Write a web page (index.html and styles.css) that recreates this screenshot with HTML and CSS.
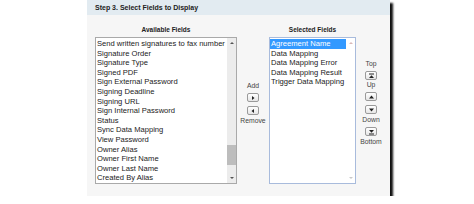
FILE: index.html
```html
<!DOCTYPE html>
<html lang="en">
<head>
    <meta charset="UTF-8">
    <title>Select Fields</title>
    <link rel="stylesheet" href="styles.css">
</head>
<body>
    <div class="panel">
        <div class="head">Step 3. Select Fields to Display</div>
        <div class="body">
            <div class="col-avail">
                <div class="label">Available Fields</div>
                <div class="list grey">
                    <div class="items">
                        <div>Send written signatures to fax number</div>
                        <div>Signature Order</div>
                        <div>Signature Type</div>
                        <div>Signed PDF</div>
                        <div>Sign External Password</div>
                        <div>Signing Deadline</div>
                        <div>Signing URL</div>
                        <div>Sign Internal Password</div>
                        <div>Status</div>
                        <div>Sync Data Mapping</div>
                        <div>View Password</div>
                        <div>Owner Alias</div>
                        <div>Owner First Name</div>
                        <div>Owner Last Name</div>
                        <div>Created By Alias</div>
                    </div>
                    <div class="scroll">
                        <span class="arr up"></span>
                        <div class="track"><div class="thumb"></div></div>
                        <span class="arr down"></span>
                    </div>
                </div>
            </div>
            <div class="col-mid">
                <div class="btxt">Add</div>
                <div class="btn"><svg width="6" height="6" viewBox="0 0 6 6"><path d="M2 1 L4.5 3 L2 5 Z" fill="#222"/></svg></div>
                <div class="btn"><svg width="6" height="6" viewBox="0 0 6 6"><path d="M4 1 L1.5 3 L4 5 Z" fill="#222"/></svg></div>
                <div class="btxt">Remove</div>
            </div>
            <div class="col-sel">
                <div class="label">Selected Fields</div>
                <div class="list blue">
                    <div class="items">
                        <div class="on">Agreement Name</div>
                        <div>Data Mapping</div>
                        <div>Data Mapping Error</div>
                        <div>Data Mapping Result</div>
                        <div>Trigger Data Mapping</div>
                    </div>
                    <div class="scroll off">
                        <span class="arr up"></span>
                        <div class="track"></div>
                        <span class="arr down"></span>
                    </div>
                </div>
            </div>
            <div class="col-order">
                <div class="btxt">Top</div>
                <div class="btn"><svg width="7" height="6" viewBox="0 0 7 6"><path d="M1 1 H6" stroke="#222" stroke-width="1"/><path d="M1 5 L3.5 2.2 L6 5 Z" fill="#222"/></svg></div>
                <div class="btxt">Up</div>
                <div class="btn"><svg width="7" height="6" viewBox="0 0 7 6"><path d="M1 4.5 L3.5 1.5 L6 4.5 Z" fill="#222"/></svg></div>
                <div class="btn"><svg width="7" height="6" viewBox="0 0 7 6"><path d="M1 1.5 L3.5 4.5 L6 1.5 Z" fill="#222"/></svg></div>
                <div class="btxt">Down</div>
                <div class="btn"><svg width="7" height="6" viewBox="0 0 7 6"><path d="M1 1 L3.5 3.8 L6 1 Z" fill="#222"/><path d="M1 5 H6" stroke="#222" stroke-width="1"/></svg></div>
                <div class="btxt">Bottom</div>
            </div>
        </div>
    </div>
</body>
</html>
```

FILE: styles.css
```css
body {
    margin: 0;
    background: #fff;
    font-family: "Liberation Sans", Arial, sans-serif;
    color: #222;
}

.panel {
    margin-left: 87px;
    width: 303px;
    height: 196px;
    background: #f6f6f6;
    box-shadow: 3px 3px 2px #111;
}

.head {
    height: 15px;
    line-height: 16px;
    padding-left: 8px;
    background: #e2ebf1;
    font-size: 7px;
    font-weight: bold;
    color: #222;
}

.body {
    display: flex;
    padding-left: 8px;
}

.label {
    height: 22px;
    box-sizing: border-box;
    padding-top: 11px;
    line-height: 8px;
    font-size: 6.5px;
    font-weight: bold;
    text-align: center;
    color: #222;
}

.col-avail { width: 142px; }
.col-sel { width: 87px; }

.list {
    display: flex;
    height: 147px;
    box-sizing: border-box;
    background: #fff;
}
.list.grey { border: 1px solid #a9a9a9; }
.list.blue { border: 1px solid #a8bbdc; }

.items {
    flex: 1;
    padding-top: 1px;
    font-size: 7.6px;
    line-height: 9.6px;
    white-space: nowrap;
    overflow: hidden;
}
.items div { padding-left: 1px; }
.items .on {
    background: #3399ff;
    color: #fff;
}

.scroll {
    width: 9px;
    display: flex;
    flex-direction: column;
    align-items: center;
    background: #ececec;
}
.scroll.off { background: #fff; }
.track {
    flex: 1;
    width: 100%;
    display: flex;
    flex-direction: column;
    justify-content: flex-end;
    padding-bottom: 8px;
}
.thumb {
    height: 20px;
    background: #bdbdbd;
}
.arr {
    width: 0;
    height: 0;
    margin: 4px 0;
    border-left: 2px solid transparent;
    border-right: 2px solid transparent;
}
.arr.up { border-bottom: 2px solid #555; }
.arr.down { border-top: 2px solid #555; }
.off .arr.up { border-bottom-color: #d9b8b8; }
.off .arr.down { border-top-color: #c9c9c9; }

.col-mid, .col-order {
    display: flex;
    flex-direction: column;
    align-items: center;
    font-size: 6.8px;
    color: #444;
}
.col-mid { width: 32px; padding-top: 67px; }
.col-order { width: 30px; padding-top: 45px; }

.btxt { line-height: 8px; height: 8px; }

.btn {
    width: 10px;
    height: 7px;
    margin-top: 3px;
    border: 1px solid #9a9a9a;
    border-radius: 2px;
    background: linear-gradient(#fff, #e6e6e6);
    display: flex;
    align-items: center;
    justify-content: center;
}
.btn svg { display: block; }
.btn + .btn { margin-top: 4px; }
.btn + .btxt { margin-top: 1px; }
.btn + .btn + .btxt { margin-top: 2px; }
.btxt + .btn + .btxt { margin-top: 2px; }
.col-order .btxt:first-child + .btn + .btxt { margin-top: 1px; }
```
